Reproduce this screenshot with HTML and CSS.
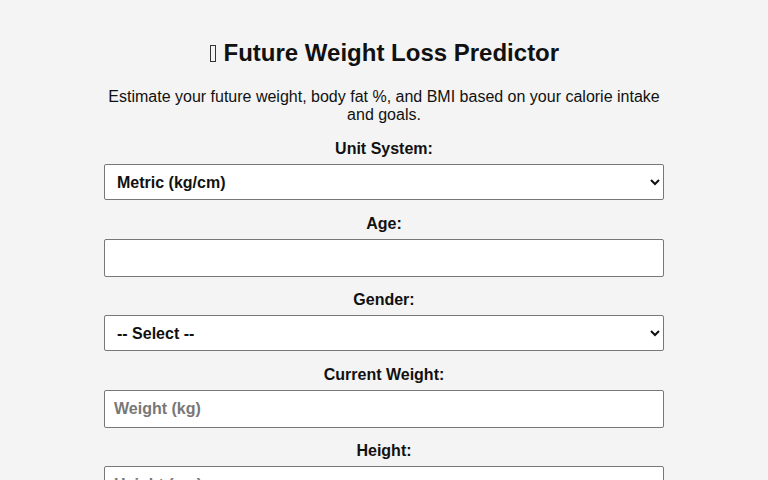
FILE: index.html
```html
<!DOCTYPE html>
<html lang="en">
<head>
<meta charset="UTF-8">
<title>Future Weight Loss Predictor</title>
<link rel="stylesheet" href="styles.css">
</head>
<body>

<div id="container">
  <h1><span class="tofu"></span> Future Weight Loss Predictor</h1>
  <p class="intro">Estimate your future weight, body fat %, and BMI based on your calorie intake and goals.</p>

  <form id="predictor">
    <label for="unit">Unit System:</label>
    <select id="unit">
      <option>Metric (kg/cm)</option>
      <option>Imperial (lb/in)</option>
    </select>

    <label for="age">Age:</label>
    <input type="number" id="age">

    <label for="gender">Gender:</label>
    <select id="gender">
      <option>-- Select --</option>
      <option>Male</option>
      <option>Female</option>
    </select>

    <label for="weight">Current Weight:</label>
    <input type="number" id="weight" placeholder="Weight (kg)">

    <label for="height">Height:</label>
    <input type="number" id="height" placeholder="Height (cm)">
  </form>
</div>

</body>
</html>
```

FILE: styles.css
```css
body {
  font-family: "Liberation Sans", Arial, sans-serif;
  margin: 0;
  background: #f4f4f4;
  color: #111;
}

#container {
  max-width: 560px;
  margin: 0 auto;
  padding-top: 39px;
  text-align: center;
}

h1 {
  font-size: 24px;
  line-height: 28px;
  margin: 0 0 21px 0;
}

/* missing emoji glyph box */
.tofu {
  display: inline-block;
  width: 4px;
  height: 15px;
  border: 1px solid #333;
  margin: 0 1px 0 1px;
  vertical-align: -1px;
}

.intro {
  font-size: 16px;
  line-height: 18px;
  margin: 0 0 16px 0;
}

label {
  display: block;
  font-weight: bold;
  font-size: 16px;
  line-height: 18px;
  margin-bottom: 6px;
}

select,
input {
  display: block;
  width: 100%;
  box-sizing: border-box;
  font-family: inherit;
  font-size: 16px;
  font-weight: bold;
  color: #111;
  background: #fff;
  border: 1px solid #777;
  border-radius: 2px;
  margin: 0 0 15px 0;
}

select {
  height: 36px;
  padding: 0 8px;
}

input {
  height: 38px;
  padding: 0 9px;
  margin-bottom: 14px;
}

input::placeholder {
  color: #777;
}
```
